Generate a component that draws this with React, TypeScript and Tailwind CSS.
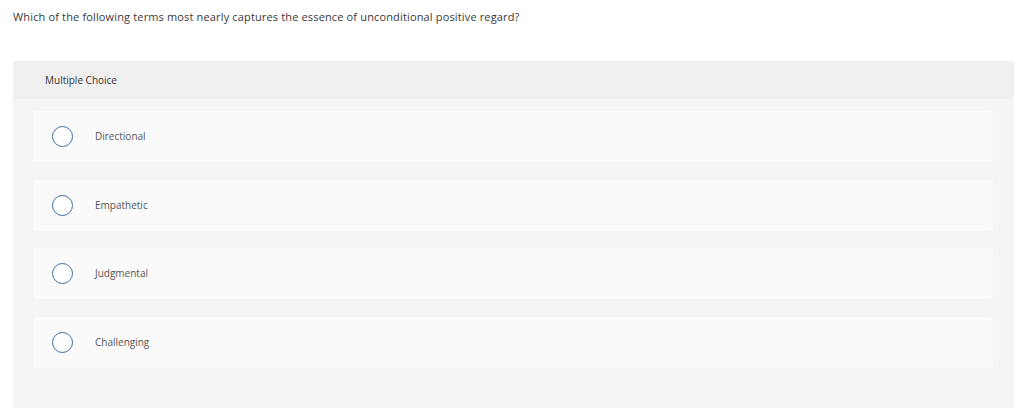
const options = ['Directional', 'Empathetic', 'Judgmental', 'Challenging'];

export default function App() {
  return (
    <div className="h-[413px] w-[1024px] bg-white font-['Open_Sans',Arial,sans-serif]">
      <div className="px-[13px] pt-[9px] text-[11px] leading-[15px] tracking-[0.15px] text-[#3a3a3a]">
        Which of the following terms most nearly captures the essence of unconditional positive regard?
      </div>
      <div className="mx-[13px] mt-[37px] w-[1001px]">
        <div className="flex h-[38px] items-center bg-[#f0f0f0] pl-[32px] text-[10px] text-[#333]">
          Multiple Choice
        </div>
        <div className="flex h-[309px] flex-col gap-[17.7px] bg-[#f5f5f5] pl-[20px] pr-[21px] pt-[12px]">
          {options.map((opt) => (
            <div key={opt} className="flex h-[51px] items-center rounded-[2px] bg-[#fafafa]">
              <span className="ml-[19px] h-[21px] w-[21px] shrink-0 rounded-full border border-[#3a6ea5] bg-white" />
              <span className="ml-[22px] text-[10px] text-[#555]">{opt}</span>
            </div>
          ))}
        </div>
      </div>
    </div>
  );
}
